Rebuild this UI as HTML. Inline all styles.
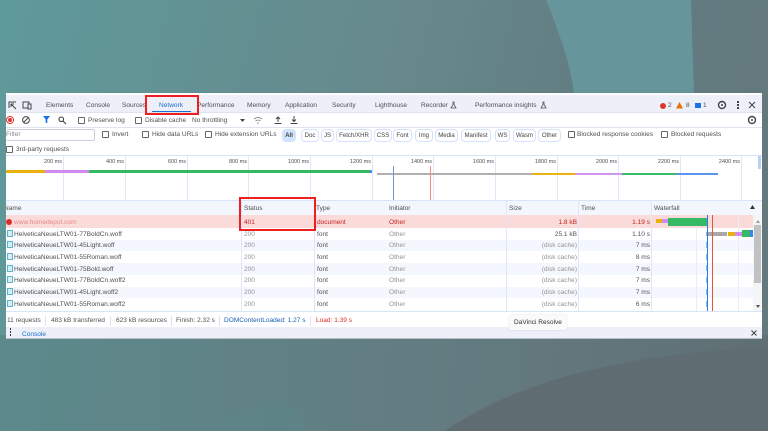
<!DOCTYPE html>
<html><head><meta charset="utf-8">
<style>
html,body{margin:0;padding:0;width:768px;height:431px;overflow:hidden;background:#5f8a8c}
#bg{position:absolute;left:0;top:0}
#p{position:absolute;left:6px;top:93px;width:756px;height:246px;background:#fff;overflow:hidden;font-family:"Liberation Sans",sans-serif;font-size:6.55px;color:#505050;filter:blur(.35px)}
.t{position:absolute;white-space:nowrap;line-height:10px}
.b{position:absolute}
.cb{position:absolute;width:5px;height:5px;border:1px solid #666;border-radius:1px;background:#fff}
.chip{position:absolute;top:36px;height:11px;line-height:11px;border:1px solid #d3e3fd;border-radius:4px;text-align:center;font-size:6.1px;color:#444;box-sizing:content-box;background:#fff}
.g{color:#939393}
.r{text-align:right}
.fil{color:#c5221f}
.ml{font-size:5.5px;top:64px;width:35px;text-align:right}
.ic{position:absolute;left:1px;width:4px;height:5px;background:#d5eef5;border:1px solid #5fb4cc}
svg{position:absolute;overflow:visible}
</style></head><body>
<svg id="bg" width="768" height="431" viewBox="0 0 768 431" style="left:0;top:0">
<defs>
<linearGradient id="a" x1="0" y1="0" x2="768" y2="200" gradientUnits="userSpaceOnUse"><stop offset="0" stop-color="#5f9a9b"/><stop offset=".5" stop-color="#67898c"/><stop offset=".75" stop-color="#627d82"/><stop offset="1" stop-color="#64787d"/></linearGradient>
<linearGradient id="c" x1="0" y1="339" x2="768" y2="400" gradientUnits="userSpaceOnUse"><stop offset="0" stop-color="#5c8a8c"/><stop offset=".6" stop-color="#637b80"/><stop offset="1" stop-color="#5f6f74"/></linearGradient>
</defs>
<rect width="768" height="431" fill="url(#a)"/>
<path d="M546 0C562 40 572 70 574 95H694L691 0Z" fill="#66959c"/>
<rect y="335" width="768" height="96" fill="url(#c)"/>
<path d="M205 431C240 410 270 395 300 412L306 431Z" fill="#5e8689" opacity=".6"/>
<path d="M445 431C520 380 620 355 768 347V431Z" fill="#5f6c71"/>
</svg>
<div id="p">
<!-- tab bar -->
<div class="b" style="left:0;top:2px;width:756px;height:17px;background:#edeff9"></div>
<svg style="left:2px;top:8px" width="10" height="9" fill="none" stroke="#444" stroke-width="1"><path d="M1 7V1H8M3 3L8 8M3 3H6M3 3V6"/></svg>
<svg style="left:16px;top:8px" width="10" height="9" fill="none" stroke="#444" stroke-width="1"><rect x="1" y="1" width="6" height="6"/><rect x="6" y="3" width="3" height="5" fill="#edeff9"/></svg>
<div class="t" style="left:40px;top:8px">Elements</div>
<div class="t" style="left:80px;top:8px">Console</div>
<div class="t" style="left:116px;top:8px">Sources</div>
<div class="t" style="left:153px;top:8px;color:#1a6fd0">Network</div>
<div class="b" style="left:146px;top:18px;width:39px;height:1px;background:#1a6fd0"></div>
<div class="t" style="left:191px;top:8px">Performance</div>
<div class="t" style="left:241px;top:8px">Memory</div>
<div class="t" style="left:279px;top:8px">Application</div>
<div class="t" style="left:326px;top:8px">Security</div>
<div class="t" style="left:369px;top:8px">Lighthouse</div>
<div class="t" style="left:415px;top:8px">Recorder</div>
<svg style="left:444px;top:8px" width="7" height="8" fill="none" stroke="#555" stroke-width=".8"><path d="M2.5 1H4.500M3 1V3.500L1 7H6L4 3.500V1"/></svg>
<div class="t" style="left:469px;top:8px">Performance insights</div>
<svg style="left:534px;top:8px" width="7" height="8" fill="none" stroke="#555" stroke-width=".8"><path d="M2.500 1H4.500M3 1V3.500L1 7H6L4 3.500V1"/></svg>
<div class="b" style="left:654px;top:9.500px;width:6px;height:6px;border-radius:50%;background:#dc362e"></div>
<div class="t" style="left:662px;top:8px">2</div>
<svg style="left:670px;top:9px" width="7" height="7"><path d="M3.500 0L7 6.500H0Z" fill="#e8710a"/></svg>
<div class="t" style="left:680px;top:8px">8</div>
<div class="b" style="left:689px;top:10px;width:6px;height:5px;background:#1a73e8"></div>
<div class="t" style="left:697px;top:8px">1</div>
<svg style="left:711px;top:7px" width="10" height="10" fill="none" stroke="#444"><circle cx="5" cy="5" r="3.500" stroke-width="1.400"/><circle cx="5" cy="5" r="1" fill="#444" stroke="none"/></svg>
<div class="b" style="left:731px;top:8px;width:2px;height:2px;background:#444;box-shadow:0 3px #444,0 6px #444"></div>
<svg style="left:742px;top:8px" width="8" height="8" stroke="#444" stroke-width="1"><path d="M1 1L7 7M7 1L1 7"/></svg>
<!-- toolbar -->
<div class="b" style="left:0;top:19px;width:756px;height:1px;background:#dfe3ee"></div>
<div class="b" style="left:2px;top:25px;width:4px;height:4px;border-radius:50%;background:#dc362e;box-shadow:0 0 0 1px #fff,0 0 0 2px #dc362e"></div>
<svg style="left:16px;top:23px" width="8" height="8" fill="none" stroke="#444"><circle cx="4" cy="4" r="3.400"/><path d="M1.500 6.500L6.500 1.500"/></svg>
<svg style="left:37px;top:23px" width="7" height="7"><path d="M0 0H7L4.300 3.500V7H2.700V3.500Z" fill="#1a73e8"/></svg>
<svg style="left:52px;top:23px" width="8" height="8" fill="none" stroke="#444" stroke-width="1.100"><circle cx="3.300" cy="3.300" r="2.300"/><path d="M5 5L8 8"/></svg>
<div class="cb" style="left:72px;top:24px"></div>
<div class="t" style="left:82px;top:23px">Preserve log</div>
<div class="cb" style="left:129px;top:24px"></div>
<div class="t" style="left:139px;top:23px">Disable cache</div>
<div class="t" style="left:186px;top:23px">No throttling</div>
<svg style="left:234px;top:26px" width="5" height="3"><path d="M0 0H5L2.500 3Z" fill="#444"/></svg>
<svg style="left:247px;top:23px" width="10" height="8" fill="none" stroke="#777" stroke-width=".8"><path d="M1 3Q5 0 9 3M2.500 5Q5 3 7.500 5M4 7H6"/></svg>
<svg style="left:268px;top:23px" width="8" height="8" fill="none" stroke="#444" stroke-width="1"><path d="M4 6V1M2 3L4 1L6 3M0.500 7.500H7.500"/></svg>
<svg style="left:284px;top:23px" width="8" height="8" fill="none" stroke="#444" stroke-width="1"><path d="M4 0V5M2 3.500L4 5.500L6 3.500M0.500 7.500H7.500"/></svg>
<svg style="left:741px;top:22px" width="10" height="10" fill="none" stroke="#444"><circle cx="5" cy="5" r="3.500" stroke-width="1.400"/><circle cx="5" cy="5" r="1" fill="#444" stroke="none"/></svg>
<div class="b" style="left:0;top:34px;width:756px;height:1px;background:#dfe3ee"></div>
<!-- filter row -->
<div class="b" style="left:0;top:36px;width:88px;height:10px;border:1px solid #ccd;border-left:0;border-radius:2px"></div>
<div class="t" style="left:0;top:37px;color:#888">Filter</div>
<div class="cb" style="left:96px;top:38px"></div>
<div class="t" style="left:106px;top:37px">Invert</div>
<div class="cb" style="left:136px;top:38px"></div>
<div class="t" style="left:146px;top:37px">Hide data URLs</div>
<div class="cb" style="left:199px;top:38px"></div>
<div class="t" style="left:209px;top:37px">Hide extension URLs</div>
<div class="chip" style="left:276px;width:12px;background:#d3e3fd;border-color:#d3e3fd;font-weight:bold">All</div>
<div class="chip" style="left:295px;width:16px">Doc</div>
<div class="chip" style="left:315px;width:11px">JS</div>
<div class="chip" style="left:330px;width:34px">Fetch/XHR</div>
<div class="chip" style="left:368px;width:16px">CSS</div>
<div class="chip" style="left:387px;width:17px">Font</div>
<div class="chip" style="left:409px;width:16px">Img</div>
<div class="chip" style="left:429px;width:21px">Media</div>
<div class="chip" style="left:455px;width:28px">Manifest</div>
<div class="chip" style="left:489px;width:13px">WS</div>
<div class="chip" style="left:507px;width:21px">Wasm</div>
<div class="chip" style="left:532px;width:21px">Other</div>
<div class="cb" style="left:562px;top:38px"></div>
<div class="t" style="left:571px;top:37px">Blocked response cookies</div>
<div class="cb" style="left:655px;top:38px"></div>
<div class="t" style="left:665px;top:37px">Blocked requests</div>
<div class="cb" style="left:0;top:53px"></div>
<div class="t" style="left:10px;top:52px">3rd-party requests</div>
<div class="b" style="left:0;top:62px;width:756px;height:1px;background:#d8e4f8"></div>
<!-- overview -->
<div class="b" style="left:57px;top:63px;width:1px;height:44px;background:#dce7fa;box-shadow:62px 0 #dce7fa,124px 0 #dce7fa,185px 0 #dce7fa,247px 0 #dce7fa,309px 0 #dce7fa,370px 0 #dce7fa,432px 0 #dce7fa,494px 0 #dce7fa,555px 0 #dce7fa,617px 0 #dce7fa,678px 0 #dce7fa"></div>
<div class="t ml" style="left:21px">200 ms</div>
<div class="t ml" style="left:83px">400 ms</div>
<div class="t ml" style="left:145px">600 ms</div>
<div class="t ml" style="left:206px">800 ms</div>
<div class="t ml" style="left:268px">1000 ms</div>
<div class="t ml" style="left:330px">1200 ms</div>
<div class="t ml" style="left:391px">1400 ms</div>
<div class="t ml" style="left:453px">1600 ms</div>
<div class="t ml" style="left:515px">1800 ms</div>
<div class="t ml" style="left:576px">2000 ms</div>
<div class="t ml" style="left:638px">2200 ms</div>
<div class="t ml" style="left:699px">2400 ms</div>
<div class="b" style="left:0;top:76.500px;width:39px;height:3px;background:#e8b10e"></div>
<div class="b" style="left:39px;top:76.500px;width:44px;height:3px;background:#d18bf0"></div>
<div class="b" style="left:83px;top:76.500px;width:281px;height:3px;background:#35b965"></div>
<div class="b" style="left:364px;top:76.500px;width:2px;height:3px;background:#4a8af0"></div>
<div class="b" style="left:371px;top:80px;width:155px;height:2px;background:#b0b0b0"></div>
<div class="b" style="left:526px;top:80px;width:43px;height:2px;background:#eab411"></div>
<div class="b" style="left:569px;top:80px;width:47px;height:2px;background:#d596f2"></div>
<div class="b" style="left:616px;top:80px;width:55px;height:2px;background:#3bbb6b"></div>
<div class="b" style="left:671px;top:80px;width:41px;height:2px;background:#5b93ee"></div>
<div class="b" style="left:387px;top:73px;width:1px;height:34px;background:#6d93d8"></div>
<div class="b" style="left:424px;top:73px;width:1px;height:34px;background:#ee8d86"></div>
<div class="b" style="left:752px;top:63px;width:3px;height:13px;background:#b9d1f5"></div>
<!-- table header -->
<div class="b" style="left:0;top:107px;width:756px;height:15px;background:#f3f6fc;border-top:1px solid #d8e4f8;box-sizing:border-box"></div>
<div class="t" style="left:-2px;top:111px">Name</div>
<div class="t" style="left:238px;top:111px">Status</div>
<div class="t" style="left:310px;top:111px">Type</div>
<div class="t" style="left:383px;top:111px">Initiator</div>
<div class="t" style="left:503px;top:111px">Size</div>
<div class="t" style="left:575px;top:111px">Time</div>
<div class="t" style="left:648px;top:111px">Waterfall</div>
<svg style="left:744px;top:112px" width="5" height="4"><path d="M0 4H5L2.500 0Z" fill="#333"/></svg>
<!-- rows -->
<div class="b" style="left:0;top:122px;width:747px;height:13px;background:#fbdada"></div>
<div class="b" style="left:0;top:146.500px;width:747px;height:11.700px;background:#f4f7fd"></div>
<div class="b" style="left:0;top:170px;width:747px;height:11.700px;background:#f4f7fd"></div>
<div class="b" style="left:0;top:193.500px;width:747px;height:11.700px;background:#f4f7fd"></div>
<!-- column lines -->
<div class="b" style="left:235px;top:107px;width:1px;height:111px;background:#dce7fa"></div>
<div class="b" style="left:308px;top:107px;width:1px;height:111px;background:#dce7fa"></div>
<div class="b" style="left:500px;top:107px;width:1px;height:111px;background:#dce7fa"></div>
<div class="b" style="left:572px;top:107px;width:1px;height:111px;background:#dce7fa"></div>
<div class="b" style="left:645px;top:107px;width:1px;height:111px;background:#dce7fa"></div>
<div class="b" style="left:690px;top:122px;width:1px;height:96px;background:#e8edf7"></div>
<div class="b" style="left:732px;top:122px;width:1px;height:96px;background:#e8edf7"></div>
<!-- row 1 -->
<div class="b" style="left:0;top:125.500px;width:6px;height:6px;border-radius:50%;background:#d9302a"></div>
<div class="t fil" style="left:8px;top:125px;color:#e58a86">www.homedepot.com</div>
<div class="t fil" style="left:238px;top:125px">401</div>
<div class="t fil" style="left:311px;top:125px">document</div>
<div class="t fil" style="left:383px;top:125px">Other</div>
<div class="t fil r" style="left:510px;width:61px;top:125px">1.8 kB</div>
<div class="t fil r" style="left:580px;width:64px;top:125px">1.19 s</div>
<!-- rows 2-8 -->
<div class="ic" style="top:137px"></div>
<div class="t" style="left:8px;top:137px">HelveticaNeueLTW01-77BoldCn.woff</div>
<div class="t g" style="left:238px;top:137px">200</div><div class="t" style="left:311px;top:137px">font</div><div class="t g" style="left:383px;top:137px">Other</div>
<div class="t r" style="left:510px;width:61px;top:137px">25.1 kB</div><div class="t r" style="left:580px;width:64px;top:137px">1.10 s</div>
<div class="ic" style="top:148px"></div>
<div class="t" style="left:8px;top:148px">HelveticaNeueLTW01-45Light.woff</div>
<div class="t g" style="left:238px;top:148px">200</div><div class="t" style="left:311px;top:148px">font</div><div class="t g" style="left:383px;top:148px">Other</div>
<div class="t g r" style="left:510px;width:61px;top:148px">(disk cache)</div><div class="t r" style="left:580px;width:64px;top:148px">7 ms</div>
<div class="ic" style="top:160px"></div>
<div class="t" style="left:8px;top:160px">HelveticaNeueLTW01-55Roman.woff</div>
<div class="t g" style="left:238px;top:160px">200</div><div class="t" style="left:311px;top:160px">font</div><div class="t g" style="left:383px;top:160px">Other</div>
<div class="t g r" style="left:510px;width:61px;top:160px">(disk cache)</div><div class="t r" style="left:580px;width:64px;top:160px">8 ms</div>
<div class="ic" style="top:172px"></div>
<div class="t" style="left:8px;top:172px">HelveticaNeueLTW01-75Bold.woff</div>
<div class="t g" style="left:238px;top:172px">200</div><div class="t" style="left:311px;top:172px">font</div><div class="t g" style="left:383px;top:172px">Other</div>
<div class="t g r" style="left:510px;width:61px;top:172px">(disk cache)</div><div class="t r" style="left:580px;width:64px;top:172px">7 ms</div>
<div class="ic" style="top:183px"></div>
<div class="t" style="left:8px;top:183px">HelveticaNeueLTW01-77BoldCn.woff2</div>
<div class="t g" style="left:238px;top:183px">200</div><div class="t" style="left:311px;top:183px">font</div><div class="t g" style="left:383px;top:183px">Other</div>
<div class="t g r" style="left:510px;width:61px;top:183px">(disk cache)</div><div class="t r" style="left:580px;width:64px;top:183px">7 ms</div>
<div class="ic" style="top:195px"></div>
<div class="t" style="left:8px;top:195px">HelveticaNeueLTW01-45Light.woff2</div>
<div class="t g" style="left:238px;top:195px">200</div><div class="t" style="left:311px;top:195px">font</div><div class="t g" style="left:383px;top:195px">Other</div>
<div class="t g r" style="left:510px;width:61px;top:195px">(disk cache)</div><div class="t r" style="left:580px;width:64px;top:195px">7 ms</div>
<div class="ic" style="top:207px"></div>
<div class="t" style="left:8px;top:207px">HelveticaNeueLTW01-55Roman.woff2</div>
<div class="t g" style="left:238px;top:207px">200</div><div class="t" style="left:311px;top:207px">font</div><div class="t g" style="left:383px;top:207px">Other</div>
<div class="t g r" style="left:510px;width:61px;top:207px">(disk cache)</div><div class="t r" style="left:580px;width:64px;top:207px">6 ms</div>
<!-- waterfall bars -->
<div class="b" style="left:650px;top:126px;width:6px;height:4px;background:#eab20d"></div>
<div class="b" style="left:656px;top:126px;width:6px;height:4px;background:#d18bf0"></div>
<div class="b" style="left:662px;top:124.500px;width:40px;height:8px;background:#35b965"></div>
<div class="b" style="left:700px;top:139px;width:21px;height:4px;background:#a8a8a8"></div>
<div class="b" style="left:722px;top:139px;width:7px;height:4px;background:#eab20d"></div>
<div class="b" style="left:729px;top:139px;width:7px;height:4px;background:#d18bf0"></div>
<div class="b" style="left:736px;top:137px;width:8px;height:7px;background:#35b965"></div>
<div class="b" style="left:744px;top:137px;width:3px;height:7px;background:#3b82f0"></div>
<div class="b" style="left:700px;top:149px;width:2px;height:6px;background:#7fc4dc"></div>
<div class="b" style="left:700px;top:161px;width:2px;height:6px;background:#7fc4dc"></div>
<div class="b" style="left:700px;top:172px;width:2px;height:6px;background:#7fc4dc"></div>
<div class="b" style="left:700px;top:184px;width:2px;height:6px;background:#7fc4dc"></div>
<div class="b" style="left:700px;top:196px;width:2px;height:6px;background:#7fc4dc"></div>
<div class="b" style="left:700px;top:208px;width:2px;height:6px;background:#7fc4dc"></div>
<div class="b" style="left:701px;top:122px;width:1px;height:96px;background:#2f7de0"></div>
<div class="b" style="left:706px;top:122px;width:1px;height:96px;background:#e2554d"></div>
<!-- scrollbar -->
<div class="b" style="left:747px;top:122px;width:9px;height:96px;background:#f5f5f5"></div>
<div class="b" style="left:748px;top:132px;width:7px;height:58px;background:#c2c2c2"></div>
<svg style="left:749.500px;top:127px" width="4" height="3"><path d="M0 3H4L2 0Z" fill="#999"/></svg>
<svg style="left:749.500px;top:212px" width="4" height="3"><path d="M0 0H4L2 3Z" fill="#555"/></svg>
<!-- status bar -->
<div class="b" style="left:0;top:218px;width:756px;height:1px;background:#d8e4f8"></div>
<div class="t" style="left:1px;top:223px">11 requests</div>
<div class="t" style="left:45px;top:223px">483 kB transferred</div>
<div class="t" style="left:110px;top:223px">623 kB resources</div>
<div class="t" style="left:170px;top:223px">Finish: 2.32 s</div>
<div class="t" style="left:218px;top:223px;color:#1a5fb4">DOMContentLoaded: 1.27 s</div>
<div class="t" style="left:310px;top:223px;color:#d93025">Load: 1.39 s</div>
<div class="b" style="left:39px;top:223px;width:1px;height:10px;background:#dfe3ee;box-shadow:65px 0 #dfe3ee,126px 0 #dfe3ee,174px 0 #dfe3ee,265px 0 #dfe3ee"></div>
<!-- drawer -->
<div class="b" style="left:0;top:234px;width:756px;height:12px;background:#edeff9;border-bottom:1px solid #b9bdc4;box-sizing:border-box"></div>
<div class="b" style="left:3.500px;top:235px;width:1.500px;height:1.500px;background:#333;box-shadow:0 3px #333,0 6px #333"></div>
<div class="t" style="left:16px;top:237px;color:#1a6fd0">Console</div>
<svg style="left:745px;top:237px" width="6" height="6" stroke="#444" stroke-width="1"><path d="M0.500 0.500L5.500 5.500M5.500 0.500L0.500 5.500"/></svg>
<!-- tooltip -->
<div class="t" style="left:503px;top:222px;width:58px;height:15px;line-height:15px;background:#fafafa;border-radius:2px;text-align:center;color:#333;box-shadow:0 0 2px rgba(0,0,0,.12)">DaVinci Resolve</div>
</div>
<!-- annotations -->
<div style="position:absolute;left:145px;top:95px;width:50px;height:16px;border:2px solid #ef1f1f"></div>
<div style="position:absolute;left:239px;top:197px;width:73px;height:30px;border:2px solid #ef1f1f"></div>
</body></html>
